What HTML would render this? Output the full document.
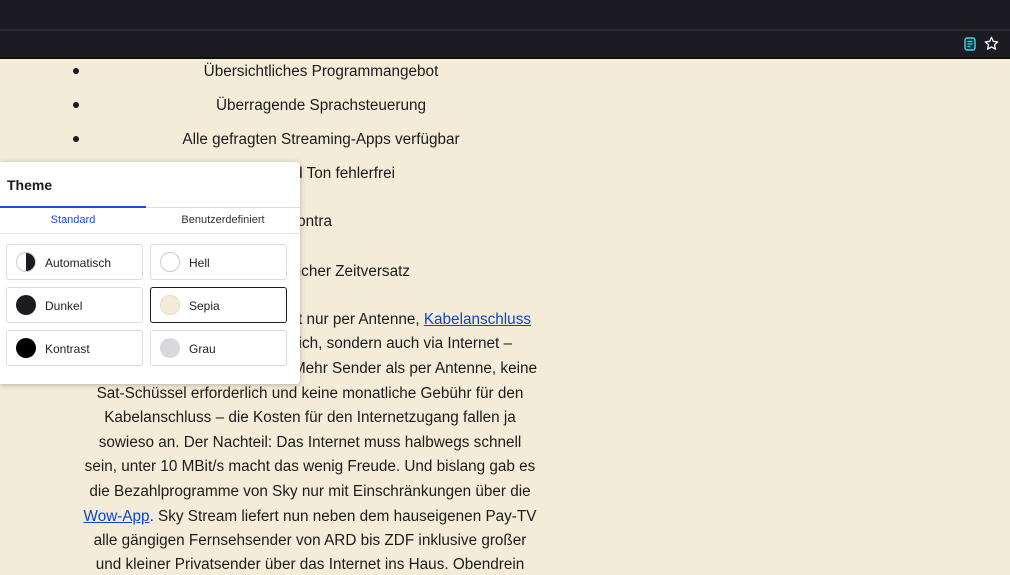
<!DOCTYPE html>
<html><head><meta charset="utf-8"><style>
*{margin:0;padding:0;box-sizing:border-box}
body{width:1010px;height:568px;overflow:hidden;background:#f4ecd8;font-family:"Liberation Sans",sans-serif;position:relative;color:#1b1b1b}
.top{position:absolute;left:0;top:0;width:1010px;height:29px;background:#1c1b22}
.sep{position:absolute;left:0;top:29px;width:1010px;height:2px;background:#2b2a33}
.tb{position:absolute;left:0;top:31px;width:1010px;height:26px;background:#1c1b22}
.tb2{position:absolute;left:0;top:57px;width:1010px;height:2px;background:#0f0f12}
.t{position:absolute;font-size:15.3px;white-space:nowrap;line-height:20px;margin-top:2px}
.c{left:60px;width:500px;text-align:center}
.r{text-align:right}
.dot{position:absolute;left:73px;width:6px;height:6px;border-radius:50%;background:#1b1b1b}
a{color:#0a46c8;text-decoration:underline}
.panel{position:absolute;left:0;top:162px;width:300px;height:222px;background:#fff;border-radius:0 4px 4px 0;box-shadow:0 1px 6px rgba(0,0,0,.25)}
.btn{position:absolute;width:137px;height:36px;border:1px solid #dcdcdf;border-radius:3px;font-size:12px;color:#222}
.btn .ci{position:absolute;left:9px;top:7px;width:20px;height:20px;border-radius:50%}
.btn span{position:absolute;left:38px;top:11px}
</style></head><body>
<div class="top"></div><div class="sep"></div><div class="tb"></div><div class="tb2"></div>
<svg style="position:absolute;left:964px;top:37px" width="12" height="14" viewBox="0 0 12 14"><rect x="1" y="1" width="10" height="12" rx="2" fill="#0b3a45" stroke="#4ad0e0" stroke-width="1.4"/><path d="M3.5 4.5h5M3.5 7h5M3.5 9.5h3" stroke="#4ad0e0" stroke-width="1.2"/></svg>
<svg style="position:absolute;left:984px;top:36px" width="15" height="15" viewBox="0 0 16 16"><path d="M8 1.5l2 4.3 4.6.5-3.4 3.1 1 4.6L8 11.7 3.8 14l1-4.6L1.4 6.3 6 5.8z" fill="none" stroke="#fbfbfe" stroke-width="1.4" stroke-linejoin="round"/></svg>

<div class="dot" style="top:68px"></div><div class="t c" style="top:60px;padding-left:22px">Übersichtliches Programmangebot</div>
<div class="dot" style="top:102px"></div><div class="t c" style="top:94px;padding-left:22px">Überragende Sprachsteuerung</div>
<div class="dot" style="top:136px"></div><div class="t c" style="top:128px;padding-left:22px">Alle gefragten Streaming-Apps verfügbar</div>
<div class="t r" style="right:615px;top:162px">Bild und Ton fehlerfrei</div>
<div class="t r" style="right:678px;top:210px">Kontra</div>
<div class="t r" style="right:600px;top:260px">Möglicher Zeitversatz</div>
<div class="t r" style="right:479px;top:308px">Nicht nur per Antenne, <a>Kabelanschluss</a></div>
<div class="t r" style="right:498px;top:332px">möglich, sondern auch via Internet –</div>
<div class="t r" style="right:473px;top:357px">Mehr Sender als per Antenne, keine</div>
<div class="t c" style="top:382px">Sat-Schüssel erforderlich und keine monatliche Gebühr für den</div>
<div class="t c" style="top:406px">Kabelanschluss – die Kosten für den Internetzugang fallen ja</div>
<div class="t c" style="top:431px">sowieso an. Der Nachteil: Das Internet muss halbwegs schnell</div>
<div class="t c" style="top:455px">sein, unter 10 MBit/s macht das wenig Freude. Und bislang gab es</div>
<div class="t c" style="top:480px">die Bezahlprogramme von Sky nur mit Einschränkungen über die</div>
<div class="t c" style="top:505px"><a>Wow-App</a>. Sky Stream liefert nun neben dem hauseigenen Pay-TV</div>
<div class="t c" style="top:529px">alle gängigen Fernsehsender von ARD bis ZDF inklusive großer</div>
<div class="t c" style="top:553px">und kleiner Privatsender über das Internet ins Haus. Obendrein</div>

<div class="panel">
<div style="position:absolute;left:7px;top:15px;font-size:14px;font-weight:bold;color:#1b1b1b">Theme</div>
<div style="position:absolute;left:0;top:44px;width:146px;height:2px;background:#1f4bd0"></div>
<div style="position:absolute;left:146px;top:45px;width:154px;height:1px;background:#dcdcdf"></div>
<div style="position:absolute;left:0;top:52px;width:146px;text-align:center;font-size:11px;color:#1f4bd0">Standard</div>
<div style="position:absolute;left:146px;top:52px;width:154px;text-align:center;font-size:11px;color:#333">Benutzerdefiniert</div>
<div style="position:absolute;left:0;top:71px;width:300px;height:1px;background:#e4e4e7"></div>
<div class="btn" style="left:6px;top:82px"><div class="ci" style="border:1px solid #ccc;background:linear-gradient(90deg,#fff 50%,#1c1b22 50%)"></div><span>Automatisch</span></div>
<div class="btn" style="left:150px;top:82px"><div class="ci" style="border:1px solid #ccc;background:#fff"></div><span>Hell</span></div>
<div class="btn" style="left:6px;top:125px"><div class="ci" style="background:#1c1b22"></div><span>Dunkel</span></div>
<div class="btn" style="left:150px;top:125px;border:1.5px solid #1b1b1b"><div class="ci" style="background:#f4ecd8;border:1px solid #e5dcc6"></div><span>Sepia</span></div>
<div class="btn" style="left:6px;top:168px"><div class="ci" style="background:#000"></div><span>Kontrast</span></div>
<div class="btn" style="left:150px;top:168px"><div class="ci" style="background:#d8d8dd"></div><span>Grau</span></div>
</div>
</body></html>
